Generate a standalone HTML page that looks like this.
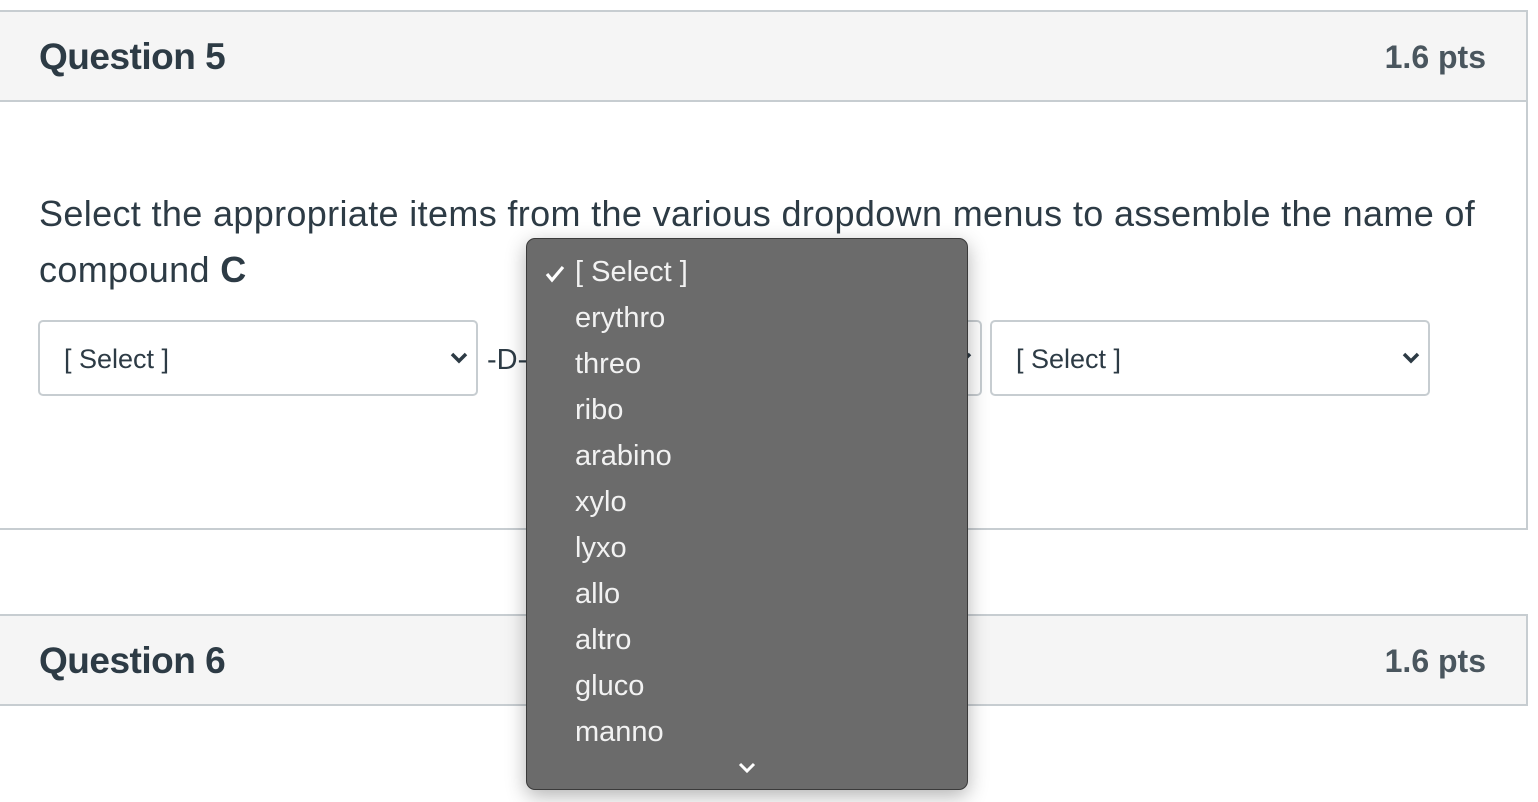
<!DOCTYPE html>
<html><head><style>
body{margin:0;width:1538px;height:802px;background:#fff;position:relative;overflow:hidden;font-family:"Liberation Sans",sans-serif;color:#2d3b45}
.hdr{position:absolute;left:0;width:1526px;height:88px;background:#f5f5f5;border-top:2px solid #c7cdd1;border-bottom:2px solid #c7cdd1;border-right:2px solid #c7cdd1}
.hdr .t{position:absolute;left:39px;top:24px;font-size:37px;font-weight:bold;letter-spacing:-0.5px}
.hdr .p{position:absolute;right:40px;top:27px;font-size:32px;font-weight:bold;color:#4a565e}
.body{position:absolute;left:0;top:102px;width:1526px;height:426px;border-right:2px solid #c7cdd1;border-bottom:2px solid #c7cdd1}
.q{position:absolute;left:39px;top:186px;font-size:36px;line-height:56px;white-space:nowrap;letter-spacing:0.35px}
.sel{position:absolute;top:320px;height:72px;border:2px solid #c7cdd1;border-radius:5px;background:#fff;font-size:27px}
.sel span{position:absolute;left:24px;top:22px}
.sel svg{position:absolute;right:7px;top:29px}
.menu{position:absolute;left:526px;top:238px;width:440px;height:550px;background:#6b6b6b;border:1px solid #3a3a3a;border-radius:9px;box-shadow:0 6px 20px rgba(0,0,0,.3);color:#f2f2f2;font-size:29px}
.menu div{position:absolute;left:48px}
</style></head><body>
<div class="hdr" style="top:10px"><div class="t">Question 5</div><div class="p">1.6 pts</div></div>
<div class="body"></div>
<div class="q">Select the appropriate items from the various dropdown menus to assemble the name of<br>compound <b>C</b></div>
<div class="sel" style="left:38px;width:436px"><span>[ Select ]</span><svg width="20" height="14" viewBox="0 0 20 14"><path d="M3 3l7 7 7-7" stroke="#2d3b45" stroke-width="3.5" fill="none"/></svg></div>
<div style="position:absolute;left:487px;top:344px;font-size:29px">-D-</div>
<div class="sel" style="left:900px;width:78px"><svg width="20" height="14" viewBox="0 0 20 14"><path d="M3 3l7 7 7-7" stroke="#2d3b45" stroke-width="3.5" fill="none"/></svg></div>
<div class="sel" style="left:990px;width:436px"><span>[ Select ]</span><svg width="20" height="14" viewBox="0 0 20 14"><path d="M3 3l7 7 7-7" stroke="#2d3b45" stroke-width="3.5" fill="none"/></svg></div>
<div class="hdr" style="top:614px"><div class="t">Question 6</div><div class="p">1.6 pts</div></div>
<div class="menu">
<svg style="position:absolute;left:18px;top:26px" width="20" height="18" viewBox="0 0 20 18"><path d="M2 9l5 6L18 2" stroke="#fff" stroke-width="3.2" fill="none"/></svg>
<div style="top:17px">[ Select ]</div>
<div style="top:63px">erythro</div>
<div style="top:109px">threo</div>
<div style="top:155px">ribo</div>
<div style="top:201px">arabino</div>
<div style="top:247px">xylo</div>
<div style="top:293px">lyxo</div>
<div style="top:339px">allo</div>
<div style="top:385px">altro</div>
<div style="top:431px">gluco</div>
<div style="top:477px">manno</div>
<svg style="position:absolute;left:210px;top:522px" width="20" height="14" viewBox="0 0 20 14"><path d="M3 3l7 7 7-7" stroke="#fff" stroke-width="3" fill="none"/></svg>
</div>
</body></html>
